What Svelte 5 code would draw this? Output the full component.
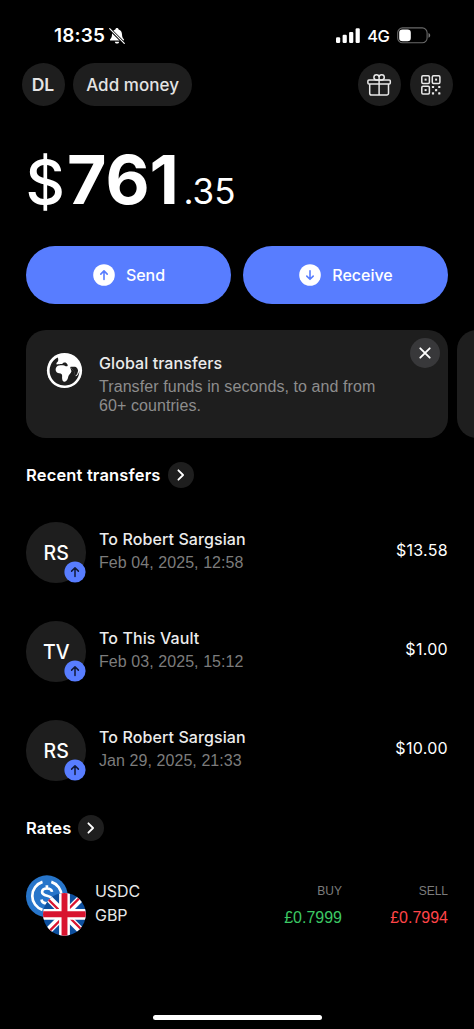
<script>
  const transfers = [
    { initials: 'RS', name: 'To Robert Sargsian', date: 'Feb 04, 2025, 12:58', amount: '$13.58' },
    { initials: 'TV', name: 'To This Vault', date: 'Feb 03, 2025, 15:12', amount: '$1.00' },
    { initials: 'RS', name: 'To Robert Sargsian', date: 'Jan 29, 2025, 21:33', amount: '$10.00' }
  ];
</script>

{#snippet chevron()}
  <button class="more" aria-label="Show all">
    <svg width="26" height="26" viewBox="0 0 26 26"><path d="M10.4 8.3 15.1 13l-4.700 4.700" fill="none" stroke="#fff" stroke-width="1.800" stroke-linecap="round" stroke-linejoin="round" /></svg>
  </button>
{/snippet}

<div class="screen">
  <div class="status">
    <div class="clock">
      <span>18:35</span>
      <svg width="18" height="18" viewBox="0 0 18 18">
        <path d="M9 1.1c-.9 0-1.5.6-1.6 1.3C5.1 3.1 4.1 5 4 7.300c-.1 2.500-.6 3.700-1.800 4.900-.5.6-.2 1.400.6 1.400h12.400c.8 0 1.100-.8.6-1.400-1.200-1.200-1.700-2.400-1.800-4.900-.1-2.300-1.100-4.200-3.400-4.900C10.500 1.700 9.900 1.100 9 1.100z" fill="#fff" />
        <path d="M6.800 14.700h4.400c-.2 1.200-1.100 1.900-2.200 1.900s-2-.7-2.200-1.900z" fill="#fff" />
        <path d="M1.700 1.900 16.100 16.300" stroke="#000" stroke-width="2.800" />
        <path d="M1.700 1.700 16.300 16.300" stroke="#fff" stroke-width="1.200" stroke-linecap="round" />
      </svg>
    </div>
    <div class="signals">
      <svg width="24" height="16" viewBox="0 0 24 16" fill="#fff">
        <rect x="0" y="9.200" width="4.200" height="5.800" rx="1.200" /><rect x="6.600" y="6.800" width="4.200" height="8.200" rx="1.200" /><rect x="13.100" y="3.900" width="4.200" height="11.100" rx="1.200" /><rect x="19.600" y="0.300" width="4.200" height="14.700" rx="1.200" />
      </svg>
      <span>4G</span>
      <svg width="34" height="17" viewBox="0 0 34 17">
        <rect x="0.700" y="0.900" width="29.400" height="14.800" rx="4.800" fill="none" stroke="#6a6a6a" stroke-width="1.100" />
        <rect x="2.200" y="2.400" width="11.600" height="11.800" rx="3.300" fill="#fff" />
        <path d="M31.500 5.900c1.300.5 1.700 1.400 1.700 2.400s-.4 1.900-1.700 2.400z" fill="#777" />
      </svg>
    </div>
  </div>

  <header>
    <button class="round initials">DL</button>
    <button class="add">Add money</button>
    <button class="round gift" aria-label="Gifts">
      <svg width="26" height="26" viewBox="0 0 26 26" fill="none" stroke="#e8e8e8" stroke-width="1.500" stroke-linejoin="round">
        <rect x="1.900" y="7.900" width="22.400" height="4" rx="1" /><path d="M3.700 11.900v9.300a1.800 1.800 0 0 0 1.800 1.800h15.200a1.800 1.800 0 0 0 1.800-1.800v-9.300M13.100 7.900V23M13.100 7.900V5.200a2.600 2.600 0 1 0-2.700 2.700zM13.100 7.900V5.200a2.600 2.600 0 1 1 2.700 2.700z" />
      </svg>
    </button>
    <button class="round" aria-label="Scan code">
      <svg width="20" height="20" viewBox="0 0 20 20" fill="#e8e8e8">
        <g fill="none" stroke="#e8e8e8" stroke-width="1.500"><rect x=".8" y=".8" width="7.600" height="7.600" rx="1.200" /><rect x="11.300" y=".8" width="7.600" height="7.600" rx="1.200" /><rect x=".8" y="11.300" width="7.600" height="7.600" rx="1.200" /></g>
        <rect x="3.600" y="3.600" width="2" height="2" /><rect x="14.100" y="3.600" width="2" height="2" /><rect x="3.600" y="14.100" width="2" height="2" />
        <rect x="10.900" y="10.900" width="2.200" height="2.200" rx=".5" /><rect x="17.200" y="10.900" width="2.200" height="2.200" rx=".5" /><rect x="14" y="14" width="2.200" height="2.200" rx=".5" /><rect x="10.900" y="17.200" width="2.200" height="2.200" rx=".5" /><rect x="17.200" y="17.200" width="2.200" height="2.200" rx=".5" />
      </svg>
    </button>
  </header>

  <div class="balance"><span class="sign">$</span><span class="whole">761</span><span class="cents">.35</span></div>

  <div class="actions">
    <button>
      <svg width="22" height="22" viewBox="0 0 22 22"><circle cx="11" cy="11" r="10.800" fill="#fff" /><path d="M11 15.500V7.200M7.800 10.100 11 6.900l3.200 3.200" fill="none" stroke="#587dff" stroke-width="1.600" stroke-linecap="round" stroke-linejoin="round" /></svg>
      <span>Send</span>
    </button>
    <button>
      <svg width="22" height="22" viewBox="0 0 22 22"><circle cx="11" cy="11" r="10.800" fill="#fff" /><path d="M11 6.700V15M7.800 12.100 11 15.300l3.200-3.200" fill="none" stroke="#587dff" stroke-width="1.600" stroke-linecap="round" stroke-linejoin="round" /></svg>
      <span>Receive</span>
    </button>
  </div>

  <div class="promos">
    <article class="card">
      <svg class="globe" width="37" height="37" viewBox="0 0 37 37">
        <circle cx="18.500" cy="18.500" r="17.600" fill="#fff" />
        <path d="M11.500 5.500A14.900 14.900 0 1 0 33.400 18.500C33 21.500 31 24 29.600 24.200c-1-.6-.6-2.500-1-4.200-.4-1.800-2.600-2.200-3.200-3.800-.4-1.200-1.300-1.500-1.100-.5.300 1.400 1.300 2.700 1.100 3.900-.3 1.900-2.800 3-3.100 5-.4 2.300-1.300 4.700-3.500 5.200-1.900.2-2.600-1.800-2.700-3.600-.1-1.600.4-2.700-.4-4-1.200-1.400-3.600-.6-5-2-1.500-1.600-1.400-4.300.2-5.800 1.600-1.300 4.500-1.200 6.300-1.100 1.500.2 2.400 1.400 4 .9.900-.4.600-1.800-.2-2.200-.5-1.400-1.600-1.800-2.900-1.400-1.200.3-1.100 1.400-2.400 1.500-1.700.2-3 .1-4.900.5-.8-.4-.3-1.600.3-2.300.9-.8 1.300-1.500 1.100-2.800-.1-.8.100-1.500-.7-2z" fill="#1e1e1e" />
        <path d="M24.500 14.800c1.600.2 3.600-.6 5.400.2 1.200.7 1.900 2.100 2.200 3.800l-.9 3.200-2.200 2.200-.8-4.500-2.300-2.700z" fill="#1e1e1e" />
      </svg>
      <div class="promo-text">
        <h3>Global transfers</h3>
        <p>Transfer funds in seconds, to and from<br />60+ countries.</p>
      </div>
      <button class="close" aria-label="Dismiss">
        <svg width="30" height="30" viewBox="0 0 30 30"><path d="m10.300 10.300 9.400 9.400m0-9.400-9.400 9.400" stroke="#fff" stroke-width="1.900" stroke-linecap="round" /></svg>
      </button>
    </article>
    <article class="card"></article>
  </div>

  <div class="heading recent"><h2>Recent transfers</h2>{@render chevron()}</div>

  <ul>
    {#each transfers as t}
      <li>
        <div class="avatar">
          {t.initials}
          <svg class="badge" width="22" height="22" viewBox="0 0 22 22"><circle cx="11" cy="11" r="10.600" fill="#587dff" /><path d="M11 15.400V6.900M7.600 10.100 11 6.700l3.400 3.400" fill="none" stroke="#111a38" stroke-width="1.500" stroke-linecap="round" stroke-linejoin="round" /></svg>
        </div>
        <div class="detail">
          <div class="name">{t.name}</div>
          <div class="date">{t.date}</div>
        </div>
        <div class="amount">{t.amount}</div>
      </li>
    {/each}
  </ul>

  <div class="heading rates"><h2>Rates</h2>{@render chevron()}</div>

  <div class="rate">
    <svg width="60" height="62" viewBox="0 0 60 62">
      <defs><clipPath id="flag"><circle cx="38.400" cy="39.300" r="21.400" /></clipPath></defs>
      <circle cx="20.900" cy="21.200" r="20.900" fill="#2775ca" />
      <g fill="none" stroke="#fff" stroke-width="2.700">
        <path d="M16.500 6.900a14.700 14.700 0 0 0 0 28M25.300 6.900a14.700 14.700 0 0 1 0 28" />
        <path d="M26 16.900c-.3-2.200-2.100-3.400-5-3.400-3.100 0-4.900 1.300-4.900 3.500 0 5 10 2.500 10 7.600 0 2.300-2.100 3.800-5.200 3.800s-5.100-1.400-5.400-3.900M20.900 10.200v3.500M20.900 28v3.500" />
      </g>
      <g clip-path="url(#flag)">
        <rect x="17" y="17" width="44" height="45" fill="#0d4f9e" />
        <path d="M17.200 17.800l43 43M60.200 17.800l-43 43" stroke="#fff" stroke-width="7" />
        <path d="M17.200 19.300l21.500 21.500M38.700 37.800l21.500-21.500M60.200 59.300 38.700 37.800M38.700 40.800l-21.500 21.500" stroke="#d8142f" stroke-width="2.300" />
        <path d="M38.500 17v45M17 39.300h44" stroke="#fff" stroke-width="10.800" />
        <path d="M38.500 17v45M17 39.300h44" stroke="#d8142f" stroke-width="5.900" />
      </g>
    </svg>
    <div class="pair"><div>USDC</div><div>GBP</div></div>
    <div class="quote buy"><small>BUY</small><span>£0.7999</span></div>
    <div class="quote sell"><small>SELL</small><span>£0.7994</span></div>
  </div>

  <div class="home"></div>
</div>

<style>
  :global(body) { margin: 0; background: #000; }
  * { box-sizing: border-box; }
  .screen { width: 474px; height: 1029px; overflow: hidden; background: #000; color: #fff; font-family: Inter, sans-serif; display: flex; flex-direction: column; }
  button { border: 0; padding: 0; margin: 0; font: inherit; color: inherit; display: flex; align-items: center; justify-content: center; flex: none; }
  svg { display: block; flex: none; }
  h2, h3, p, ul { margin: 0; padding: 0; font-weight: 500; }
  .status { height: 63px; flex: none; padding: 8px 43px 0 54px; display: flex; justify-content: space-between; align-items: center; }
  .clock { display: flex; align-items: center; gap: 3px; font-size: 19px; font-weight: 600; letter-spacing: 0.150px; }
  .signals { display: flex; align-items: center; gap: 7.500px; font-size: 16.500px; font-weight: 500; letter-spacing: -0.400px; }
  header { height: 43px; flex: none; display: flex; gap: 9px; padding: 0 21.500px 0 21.500px; }
  .round { width: 43px; height: 43px; border-radius: 50%; background: #1e1e1e; }
  .initials { font-size: 17.500px; font-weight: 600; color: #e4e4e4; }
  .add { width: 119.500px; margin-left: -0.600px; border-radius: 22px; background: #1e1e1e; color: #e4e4e4; font-size: 17px; font-weight: 500; letter-spacing: 0.060px; }
  .gift { margin-left: auto; }
  .balance { height: 140px; flex: none; padding: 32px 0 0 25.500px; line-height: 82px; white-space: nowrap; font-size: 68px; }
  .sign { font-size: 61px; font-weight: 500; letter-spacing: 2px; }
  .whole { font-weight: 700; }
  .cents { font-size: 35px; margin-left: 4.500px; }
  .actions { height: 58px; flex: none; padding: 0 26px; display: grid; grid-template-columns: 1fr 1fr; gap: 12px; }
  .actions button { border-radius: 29px; background: #587dff; gap: 11px; padding-left: 1px; font-size: 16px; font-weight: 500; }
  .promos { margin-top: 26px; height: 108px; flex: none; padding-left: 26px; display: flex; gap: 9px; }
  .card { width: 422px; flex: none; border-radius: 20px; background: #1e1e1e; display: flex; padding: 8px 8.500px 0 20px; }
  .globe { margin-top: 14px; }
  .promo-text { margin: 15px 0 0 16px; flex: 1; white-space: nowrap; }
  h3 { font-size: 16px; font-weight: 500; line-height: 20px; letter-spacing: 0.080px; color: #ececec; }
  p { margin-top: 4px; font: 16px/19px "Liberation Sans", sans-serif; letter-spacing: 0.080px; color: #8d8d8d; }
  .close { width: 30px; height: 30px; border-radius: 50%; background: #38383a; }
  .heading { height: 26px; flex: none; padding-left: 26px; display: flex; align-items: center; gap: 7px; }
  h2 { font-size: 16.500px; font-weight: 600; letter-spacing: 0.160px; }
  .more { width: 26px; height: 26px; border-radius: 50%; background: #1e1e1e; }
  .recent { margin-top: 24px; }
  ul { list-style: none; margin-top: 34px; display: flex; flex-direction: column; gap: 38px; }
  li { height: 61px; display: flex; padding: 0 26px; }
  .avatar { position: relative; width: 60.400px; height: 61px; border-radius: 50%; background: #1e1e1e; display: flex; align-items: center; justify-content: center; font-size: 19.500px; font-weight: 500; }
  .badge { position: absolute; right: 0; bottom: 0; }
  .detail { margin: 6px 0 0 12.600px; flex: 1; }
  .name { font-size: 16px; line-height: 22px; font-weight: 500; letter-spacing: 0.100px; color: #ececec; }
  .date { margin-top: 1px; font: 16px/24px "Liberation Sans", sans-serif; letter-spacing: 0.070px; color: #7c7c7c; }
  .amount { font-size: 16px; font-weight: 400; line-height: 57px; letter-spacing: 0.300px; }
  .rates { margin-top: 34px; }
  .rate { margin-top: 34px; height: 62px; flex: none; padding: 0 26px; display: flex; font-family: "Liberation Sans", sans-serif; }
  .pair { margin: 4px 0 0 9px; flex: 1; font: 16px/24px Inter, sans-serif; letter-spacing: -0.050px; color: #e8e8e8; }
  .quote { display: flex; flex-direction: column; align-items: flex-end; font-size: 16px; line-height: 30px; padding-top: 4px; }
  small { font-size: 12px; line-height: 24px; color: #7c7c7c; }
  .buy { color: #3cc864; }
  .sell { width: 106px; color: #ff4548; }
  .home { width: 169px; height: 5px; border-radius: 3px; background: #fff; margin: auto auto 9px 153px; flex: none; }
</style>
